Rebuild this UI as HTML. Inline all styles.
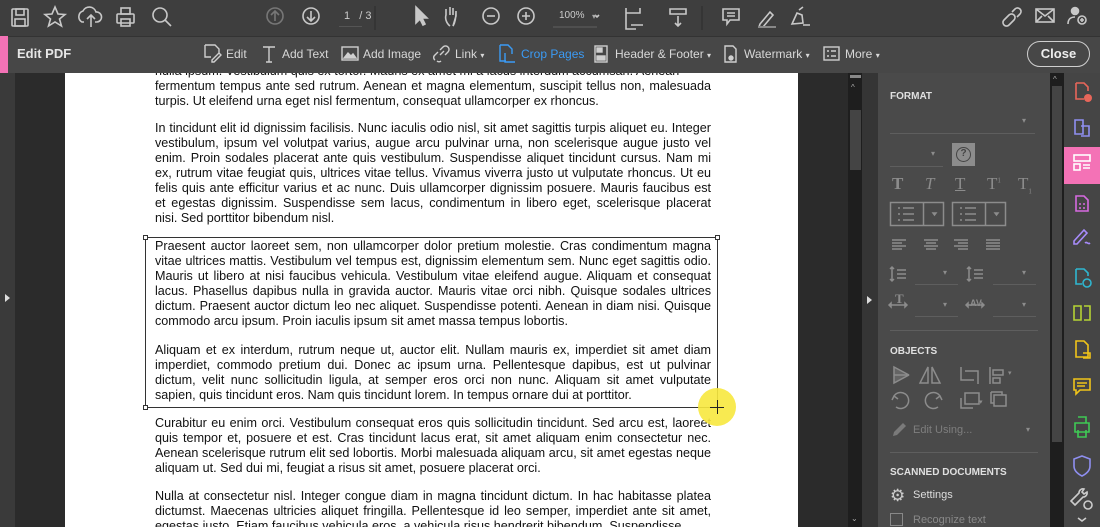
<!DOCTYPE html>
<html><head><meta charset="utf-8"><style>
*{margin:0;padding:0;box-sizing:border-box}
body{width:1100px;height:527px;overflow:hidden;background:#2b2b2b;font-family:"Liberation Sans",Arial,sans-serif;position:relative}
.a{position:absolute}
#tb1{left:0;top:0;width:1100px;height:36px;background:#3e3e3e}
#tb2{left:0;top:36px;width:1100px;height:37px;background:#474747;border-top:1px solid #333}
.t2{position:absolute;top:47px;font-size:12px;color:#d8d8d8}
.page{left:65px;top:73px;width:733px;height:454px;background:#fff;overflow:hidden}
.p{position:absolute;left:90px;width:556px;font-size:12.6px;line-height:15px;color:#111;text-align:justify;text-align-last:left}
.j{text-align:justify;text-align-last:justify}
#panel{left:878px;top:73px;width:172px;height:454px;background:#4a4a4a}
.pl{position:absolute;font-size:10px;font-weight:bold;color:#e0e0e0}
.g{color:#8c8c8c}
.ln{position:absolute;height:1px;background:#5e5e5e}
</style></head><body>
<div class="a" id="tb1"></div>
<div class="a" id="tb2"></div>
<div class="a" style="left:0;top:36px;width:8px;height:37px;background:#f472b6"></div>
<svg class="a" style="left:0;top:0" width="1100" height="36" fill="none" stroke="#c8c8c8" stroke-width="1.6">
<rect x="12" y="9" width="16" height="17" rx="1"/><rect x="16" y="9" width="8" height="6"/><rect x="15" y="19" width="10" height="7"/>
<path d="M55 7l3 7 7 .5-5.5 4.5 2 7-6.5-4-6.5 4 2-7L45 14.5l7-.5z"/>
<path d="M84 22h-2a6 6 0 0 1 1-11 7 7 0 0 1 13 1 5 5 0 0 1 1 10h-2M91 27V15m-4 4l4-4 4 4"/>
<rect x="117" y="14" width="17" height="9" rx="1"/><rect x="121" y="8" width="9" height="6"/><rect x="121" y="19" width="9" height="7"/>
<circle cx="160" cy="15" r="7"/><path d="M165 20l6 6"/>
<circle cx="275" cy="16" r="8" stroke="#777"/><path d="M275 21v-10m-4 4l4-4 4 4" stroke="#777"/>
<circle cx="311" cy="16" r="8"/><path d="M311 11v10m-4-4l4 4 4-4"/>
<path d="M375 6v24" stroke="#333"/>
<path d="M416 7v16l4-4 3 6 2-1-3-6h5z" fill="#c8c8c8"/>
<path d="M450 26c-4-3-5-8-4-11v-6m4 6v-8m3 8v-7m3 8v-5c0 7-1 12-3 15z"/>
<circle cx="491" cy="16" r="8"/><path d="M487 16h8"/>
<circle cx="526" cy="16" r="8"/><path d="M522 16h8m-4-4v8"/>
<path d="M553 27h44" stroke="#555"/><path d="M595 15l2 2 2-2" />
<path d="M626 8v5h14V8M626 13v16h10M631 25h12" />
<path d="M670 9h16v5h-16zM678 16v10m-3-3l3 3 3-3"/>
<path d="M702 6v24" stroke="#333"/>
<path d="M723 9h16v11h-9l-3 4v-4h-4zM727 13h8M727 16h8"/>
<path d="M760 24l10-12 3 3-10 12h-4z"/><path d="M758 27h18" stroke="#888" stroke-width="2"/>
<path d="M792 24l5-11 5 2 1 8zM799 10l4-3M803 25h7"/>
<path d="M1004 20l5-5a3 3 0 0 1 5 5l-5 5a3 3 0 0 1-5-5zM1012 12l3-3a3 3 0 0 1 5 5l-3 3"/>
<rect x="1036" y="9" width="18" height="13"/><path d="M1036 9l9 7 9-7M1036 22l6-6m12 6l-6-6"/>
<circle cx="1075" cy="11" r="3.5" fill="#c8c8c8"/><path d="M1068 24c0-5 3-7 7-7" /><circle cx="1082" cy="20" r="4"/><path d="M1080 20h4m-2-2v4"/>
</svg>
<div class="a" style="left:344px;top:10px;font-size:11px;color:#ccc">1 &nbsp;&nbsp;/ 3</div>
<div class="a" style="left:339px;top:26px;width:23px;height:1px;background:#555"></div>
<div class="a" style="left:559px;top:10px;font-size:10px;color:#ccc">100%</div>
<div class="a" style="left:592px;top:12px;font-size:8px;color:#aaa">▾</div>
<div class="a" style="left:17px;top:46px;font-size:13px;color:#e6e6e6;font-weight:bold">Edit PDF</div>
<svg class="a" style="left:0;top:36px" width="1100" height="37" fill="none" stroke="#cfcfcf" stroke-width="1.4">
<path d="M205 9h10l4 4v4M205 9v12h6M212 24l7-7 2 2-7 7h-2z"/>
<path d="M263 11h12M269 11v15M266 26h6"/>
<rect x="342" y="11" width="16" height="13"/><path d="M344 22l4-5 3 3 2-2 3 4z" fill="#cfcfcf"/>
<path d="M435 24a3 3 0 0 1 0-5l3-3m2-2l3-3a3 3 0 0 1 5 5l-3 3m-5 0l4-4M437 25a3 3 0 0 0 4 0"/>
<path d="M500 9h8l4 4v5M500 9v16h6M505 17v9h10" stroke="#3b9bf5"/>
<rect x="595" y="10" width="12" height="16"/><rect x="597" y="12" width="5" height="4" fill="#cfcfcf"/><rect x="597" y="20" width="8" height="4" fill="#cfcfcf"/>
<path d="M725 10h8l3 3v13h-11z"/><circle cx="731" cy="22" r="2" fill="#cfcfcf"/>
<rect x="824" y="11" width="15" height="13"/><path d="M827 15h2m2 0h5M827 20h2m2 0h5"/>
</svg>
<div class="t2" style="left:226px">Edit</div>
<div class="t2" style="left:282px">Add Text</div>
<div class="t2" style="left:363px">Add Image</div>
<div class="t2" style="left:455px">Link <span style="font-size:8px">▾</span></div>
<div class="t2" style="left:521px;color:#3b9bf5">Crop Pages</div>
<div class="t2" style="left:615px">Header &amp; Footer <span style="font-size:8px">▾</span></div>
<div class="t2" style="left:744px">Watermark <span style="font-size:8px">▾</span></div>
<div class="t2" style="left:845px">More <span style="font-size:8px">▾</span></div>
<div class="a" style="left:1027px;top:41px;width:63px;height:26px;border:1px solid #cfcfcf;border-radius:13px;color:#eee;font-size:13px;font-weight:bold;text-align:center;line-height:24px">Close</div>
<div class="a" style="left:0;top:73px;width:15px;height:454px;background:#3a3a3a"></div>
<div class="a" style="left:5px;top:294px;width:0;height:0;border-left:5px solid #ddd;border-top:4px solid transparent;border-bottom:4px solid transparent"></div>
<div class="a page">
<div class="p" style="top:-9px">nulla ipsum. Vestibulum quis ex tortor. Mauris ex amet mi a lacus interdum accumsan. Aenean<br>fermentum tempus ante sed rutrum. Aenean et magna elementum, suscipit tellus non, malesuada turpis. Ut eleifend urna eget nisl fermentum, consequat ullamcorper ex rhoncus.</div>
<div class="p" style="top:48px">
<div class="j">In tincidunt elit id dignissim facilisis. Nunc iaculis odio nisl, sit amet sagittis turpis aliquet eu. Integer</div>
<div class="j">vestibulum, ipsum vel volutpat varius, augue arcu pulvinar urna, non scelerisque augue justo vel</div>
<div class="j">enim. Proin sodales placerat ante quis vestibulum. Suspendisse aliquet tincidunt cursus. Nam mi</div>
<div class="j">ex, rutrum vitae feugiat quis, ultrices vitae tellus. Vivamus viverra justo ut vulputate rhoncus. Ut eu</div>
<div class="j">felis quis ante efficitur varius et ac nunc. Duis ullamcorper dignissim posuere. Mauris faucibus est</div>
<div class="j">et egestas dignissim. Suspendisse sem lacus, condimentum in libero eget, scelerisque placerat</div>
<div>nisi. Sed porttitor bibendum nisl.</div></div>
<div class="p" style="top:166px">Praesent auctor laoreet sem, non ullamcorper dolor pretium molestie. Cras condimentum magna vitae ultrices mattis. Vestibulum vel tempus est, dignissim elementum sem. Nunc eget sagittis odio. Mauris ut libero at nisi faucibus vehicula. Vestibulum vitae eleifend augue. Aliquam et consequat lacus. Phasellus dapibus nulla in gravida auctor. Mauris vitae orci nibh. Quisque sodales ultrices dictum. Praesent auctor dictum leo nec aliquet. Suspendisse potenti. Aenean in diam nisi. Quisque commodo arcu ipsum. Proin iaculis ipsum sit amet massa tempus lobortis.</div>
<div class="p" style="top:270px">Aliquam et ex interdum, rutrum neque ut, auctor elit. Nullam mauris ex, imperdiet sit amet diam imperdiet, commodo pretium dui. Donec ac ipsum urna. Pellentesque dapibus, est ut pulvinar dictum, velit nunc sollicitudin ligula, at semper eros orci non nunc. Aliquam sit amet vulputate sapien, quis tincidunt eros. Nam quis tincidunt lorem. In tempus ornare dui at porttitor.</div>
<div class="p" style="top:343px">Curabitur eu enim orci. Vestibulum consequat eros quis sollicitudin tincidunt. Sed arcu est, laoreet quis tempor et, posuere et est. Cras tincidunt lacus erat, sit amet aliquam enim consectetur nec. Aenean scelerisque rutrum elit sed lobortis. Morbi malesuada aliquam arcu, sit amet egestas neque aliquam ut. Sed dui mi, feugiat a risus sit amet, posuere placerat orci.</div>
<div class="p" style="top:416px">Nulla at consectetur nisl. Integer congue diam in magna tincidunt dictum. In hac habitasse platea dictumst. Maecenas ultricies aliquet fringilla. Pellentesque id leo semper, imperdiet ante sit amet, egestas justo. Etiam faucibus vehicula eros, a vehicula risus hendrerit bibendum. Suspendisse</div>
<div class="a" style="left:80px;top:164px;width:573px;height:171px;border:1px solid #333"></div>
<div class="a" style="left:78px;top:162px;width:5px;height:5px;border:1px solid #333;background:#fff"></div>
<div class="a" style="left:650px;top:162px;width:5px;height:5px;border:1px solid #333;background:#fff"></div>
<div class="a" style="left:78px;top:332px;width:5px;height:5px;border:1px solid #333;background:#fff"></div>
<div class="a" style="left:633px;top:315px;width:38px;height:38px;border-radius:50%;background:#f7e83e;opacity:.9"></div>
<div class="a" style="left:645px;top:334px;width:14px;height:1px;background:#222"></div>
<div class="a" style="left:652px;top:327px;width:1px;height:14px;background:#222"></div>
</div>
<div class="a" style="left:848px;top:73px;width:14px;height:454px;background:#1e1e1e"></div>
<div class="a" style="left:850px;top:75px;width:11px;height:3px;background:#888"></div>
<div class="a" style="left:851px;top:83px;font-size:8px;color:#aaa">^</div>
<div class="a" style="left:850px;top:110px;width:11px;height:60px;background:#444"></div>
<div class="a" style="left:851px;top:514px;font-size:8px;color:#aaa">⌄</div>
<div class="a" style="left:862px;top:73px;width:16px;height:454px;background:#353535"></div>
<div class="a" style="left:867px;top:296px;width:0;height:0;border-left:5px solid #ddd;border-top:4px solid transparent;border-bottom:4px solid transparent"></div>
<div class="a" id="panel"></div>
<div class="pl" style="left:890px;top:91px">FORMAT</div>
<div class="ln" style="left:890px;top:133px;width:145px"></div>
<div class="a g" style="left:1022px;top:116px;font-size:8px">▾</div>
<div class="ln" style="left:890px;top:166px;width:53px"></div>
<div class="a g" style="left:931px;top:149px;font-size:8px">▾</div>
<div class="a" style="left:952px;top:143px;width:23px;height:23px;background:#8c8c8c"></div>
<div class="a" style="left:956px;top:147px;width:15px;height:15px;border:1.5px solid #444;border-radius:50%;font-size:10px;color:#444;text-align:center;line-height:12px;font-weight:bold">?</div>
<div class="a g" style="left:892px;top:174px;font-size:17px;font-family:'Liberation Serif',serif;font-weight:bold">T</div>
<div class="a g" style="left:925px;top:174px;font-size:17px;font-family:'Liberation Serif',serif;font-style:italic">T</div>
<div class="a g" style="left:955px;top:174px;font-size:17px;font-family:'Liberation Serif',serif;text-decoration:underline">T</div>
<div class="a g" style="left:987px;top:174px;font-size:17px;font-family:'Liberation Serif',serif">T<sup style="font-size:7px">1</sup></div>
<div class="a g" style="left:1018px;top:174px;font-size:17px;font-family:'Liberation Serif',serif">T<sub style="font-size:7px">1</sub></div>
<svg class="a" style="left:878px;top:195px" width="172" height="130" fill="none" stroke="#8c8c8c" stroke-width="1.5">
<rect x="12.5" y="7.5" width="53" height="23"/><path d="M45.5 7v24M58 18l-3 0 1.5 2z"/><path d="M20 13h2m3 0h11M20 19h2m3 0h11M20 25h2m3 0h11"/>
<rect x="74.5" y="7.5" width="53" height="23"/><path d="M107.5 7v24M120 18l-3 0 1.5 2z"/><path d="M82 13h2m3 0h11M82 19h2m3 0h11M82 25h2m3 0h11"/>
<path d="M14 45h14M14 48h10M14 51h14M14 54h10M46 45h14M48 48h10M46 51h14M48 54h10M76 45h14M80 48h10M76 51h14M80 54h10M108 45h14M108 48h14M108 51h14M108 54h14"/>
<path d="M14 72v14m-2-12l2-2 2 2m-4 10l2 2 2-2M19 75h9M19 79h9M19 83h9M91 72v14m-2-12l2-2 2 2m-4 10l2 2 2-2M96 75h9M96 79h9M96 83h9"/>
<path d="M13 110h14M11 110l2-2v4zM29 110l-2-2v4zM90 110h14M88 110l2-2v4zM106 110l-2-2v4z"/>
</svg>
<div class="a g" style="left:895px;top:291px;font-size:13px;font-weight:bold;font-family:'Liberation Serif',serif">T</div>
<div class="a g" style="left:970px;top:298px;font-size:9px;font-weight:bold">AV</div>
<div class="ln" style="left:915px;top:284px;width:43px"></div><div class="ln" style="left:993px;top:284px;width:43px"></div>
<div class="ln" style="left:915px;top:316px;width:43px"></div><div class="ln" style="left:993px;top:316px;width:43px"></div>
<div class="a g" style="left:943px;top:268px;font-size:8px">▾</div><div class="a g" style="left:1022px;top:268px;font-size:8px">▾</div>
<div class="a g" style="left:943px;top:300px;font-size:8px">▾</div><div class="a g" style="left:1022px;top:300px;font-size:8px">▾</div>
<div class="ln" style="left:890px;top:330px;width:148px"></div>
<div class="pl" style="left:890px;top:346px">OBJECTS</div>
<svg class="a" style="left:878px;top:360px" width="172" height="80" fill="none" stroke="#8c8c8c" stroke-width="1.5">
<path d="M16 7l15 8-15 0zM16 15l15 0-15 8z" fill="#8c8c8c" fill-opacity=".4"/>
<path d="M50 23V7l-8 16zM54 23V7l8 16z"/>
<path d="M83 7v13h13M87 11h13v13"/>
<path d="M112 7v17M115 10h10v5h-10zM115 18h7v5h-7z"/>
<path d="M16 36a8 8 0 1 1 2 11M14 40l2-4 4 3"/><path d="M62 36a8 8 0 1 0-2 11M64 40l-2-4-4 3"/>
<rect x="87" y="33" width="14" height="11"/><path d="M83 38v10h12"/>
<rect x="116" y="35" width="12" height="11"/><path d="M113 32h11v3M113 32v11h3"/>
</svg>
<div class="a g" style="left:1008px;top:369px;font-size:7px">▾</div><div class="a g" style="left:979px;top:398px;font-size:7px">▾</div>
<svg class="a" style="left:890px;top:421px" width="18" height="18"><path d="M3 15l1-4 9-9 3 3-9 9z" fill="#7a7a7a"/></svg>
<div class="a" style="left:913px;top:424px;font-size:11px;color:#7e7e7e">Edit Using...</div>
<div class="a g" style="left:1026px;top:425px;font-size:8px">▾</div>
<div class="ln" style="left:890px;top:452px;width:148px"></div>
<div class="pl" style="left:890px;top:467px">SCANNED DOCUMENTS</div>
<div class="a" style="left:890px;top:486px;font-size:17px;color:#ccc">⚙</div>
<div class="a" style="left:913px;top:489px;font-size:11px;color:#ddd">Settings</div>
<div class="a" style="left:890px;top:513px;width:13px;height:13px;border:1px solid #888"></div>
<div class="a" style="left:913px;top:514px;font-size:11px;color:#888">Recognize text</div>
<div class="a" style="left:1050px;top:73px;width:14px;height:454px;background:#1e1e1e"></div>
<div class="a" style="left:1052px;top:86px;width:10px;height:356px;background:#444"></div>
<div class="a" style="left:1053px;top:75px;font-size:8px;color:#aaa">^</div>
<div class="a" style="left:1064px;top:73px;width:36px;height:454px;background:#454545"></div>
<div class="a" style="left:1064px;top:147px;width:36px;height:37px;background:#f472b6"></div>
<svg class="a" style="left:1064px;top:73px" width="36" height="454" fill="none" stroke-width="1.6">
<path d="M12 10h8l4 4v4M12 10v16h8" stroke="#e8665a"/><circle cx="24" cy="25" r="4" fill="#e8665a"/>
<path d="M11 47h8v14h-8zM17 53h8v10h-8" stroke="#8f8ff0"/>
<rect x="10" y="82" width="16" height="6" stroke="#fff"/><rect x="10" y="91" width="6" height="6" stroke="#fff"/><path d="M19 92h7M19 95h7" stroke="#fff"/>
<path d="M12 123h8l4 4v11H12zM15 131h2m2 0h2M15 135h2m2 0h2" stroke="#d66ae0"/>
<path d="M10 168l10-11 3 3-10 11h-3zM21 170c2-2 3 2 5 0" stroke="#a78bfa"/>
<path d="M12 196h8l4 4v3M12 196v15h6" stroke="#2fb6d0"/><circle cx="23" cy="210" r="4" stroke="#2fb6d0"/>
<path d="M10 233h7v14h-7zM20 233h6v14h-6" stroke="#b5d334"/>
<path d="M12 268h8l4 4v12H12zM19 280h7v5h-7" stroke="#f0c419"/>
<path d="M10 306h16v11h-10l-4 4v-4h-2zM13 310h10M13 313h8" stroke="#f0c419"/>
<path d="M11 350h14v9H11zM14 344h8v6M14 357v7h8v-7" stroke="#3fca55"/>
<path d="M18 383l8 3v7c0 5-4 8-8 10-4-2-8-5-8-10v-7z" stroke="#8f8ff0"/>
<path d="M11 432l8-8a4 4 0 0 0 4-5l-3 2-2-2 2-3a4 4 0 0 0-5 4l-8 8z" stroke="#ccc"/><circle cx="24" cy="432" r="4" stroke="#ccc"/>
<path d="M14 445l4 3 4-3" stroke="#ccc"/>
</svg>
</body></html>
